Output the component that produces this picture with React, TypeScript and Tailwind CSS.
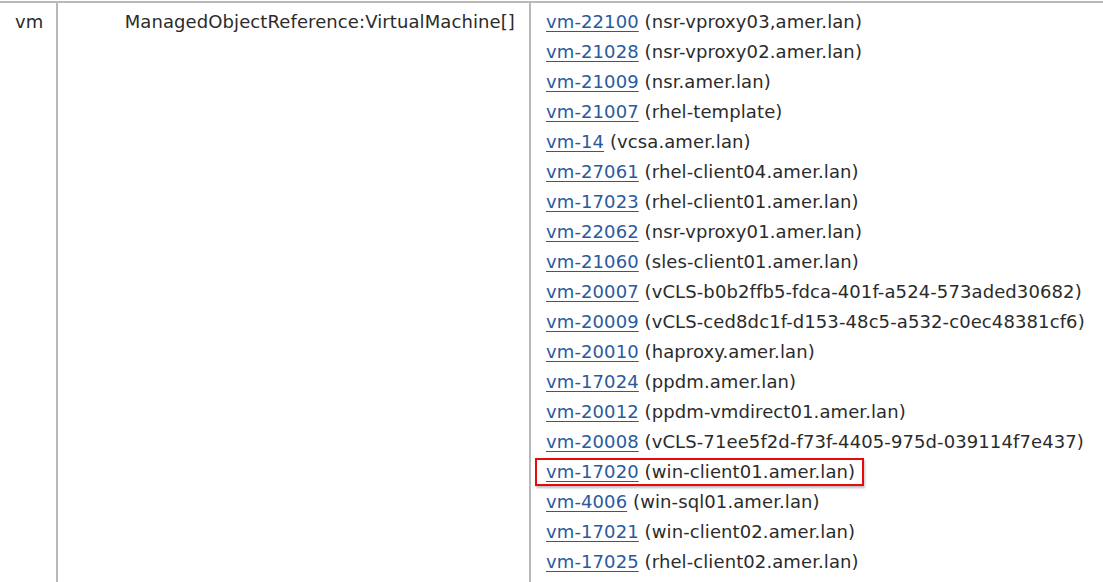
const vms: [string, string][] = [
  ["vm-22100", "nsr-vproxy03,amer.lan"],
  ["vm-21028", "nsr-vproxy02.amer.lan"],
  ["vm-21009", "nsr.amer.lan"],
  ["vm-21007", "rhel-template"],
  ["vm-14", "vcsa.amer.lan"],
  ["vm-27061", "rhel-client04.amer.lan"],
  ["vm-17023", "rhel-client01.amer.lan"],
  ["vm-22062", "nsr-vproxy01.amer.lan"],
  ["vm-21060", "sles-client01.amer.lan"],
  ["vm-20007", "vCLS-b0b2ffb5-fdca-401f-a524-573aded30682"],
  ["vm-20009", "vCLS-ced8dc1f-d153-48c5-a532-c0ec48381cf6"],
  ["vm-20010", "haproxy.amer.lan"],
  ["vm-17024", "ppdm.amer.lan"],
  ["vm-20012", "ppdm-vmdirect01.amer.lan"],
  ["vm-20008", "vCLS-71ee5f2d-f73f-4405-975d-039114f7e437"],
  ["vm-17020", "win-client01.amer.lan"],
  ["vm-4006", "win-sql01.amer.lan"],
  ["vm-17021", "win-client02.amer.lan"],
  ["vm-17025", "rhel-client02.amer.lan"],
];

export default function App() {
  return (
    <div className="w-[1103px] h-[582px] overflow-hidden bg-white pt-[1px] text-[18px] tracking-[0.1px] text-[#2b2b2b] font-['DejaVu_Sans',sans-serif]">
      <div className="flex border-t-2 border-[#b9b9b9] h-full">
        <div className="w-[58px] shrink-0 pl-[15px] pt-[4px] leading-[30px] border-r-2 border-[#b9b9b9]">vm</div>
        <div className="w-[473px] shrink-0 pr-[14px] pt-[4px] leading-[30px] text-right border-r-2 border-[#b9b9b9]">
          ManagedObjectReference:VirtualMachine[]
        </div>
        <ul className="pl-[15px] pt-[4px] leading-[30px] whitespace-nowrap">
          {vms.map(([id, name]) => (
            <li key={id} className="relative">
              <a href="#" className="text-[#2a5a9c] underline underline-offset-[3px]">{id}</a> ({name})
              {id === "vm-17020" && (
                <span className="absolute left-[-11px] top-[1px] w-[329px] h-[28px] border-2 border-[#e8090e] shadow-[1px_2px_2px_rgba(0,0,0,0.25)]" />
              )}
            </li>
          ))}
        </ul>
      </div>
    </div>
  );
}
